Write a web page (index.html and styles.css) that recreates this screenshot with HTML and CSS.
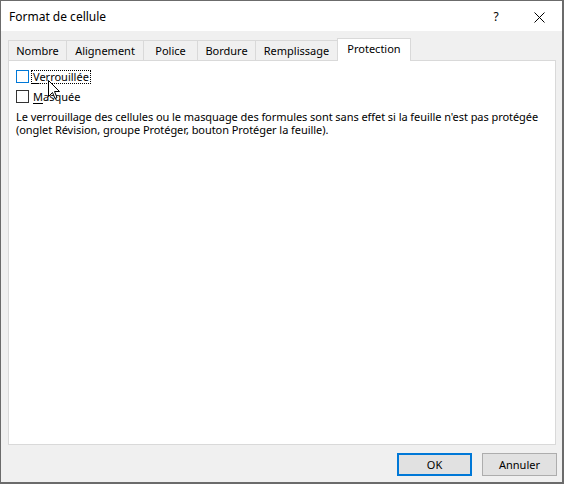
FILE: index.html
```html
<!DOCTYPE html>
<html lang="fr">
<head>
<meta charset="utf-8">
<title>Format de cellule</title>
<link rel="stylesheet" href="styles.css">
</head>
<body>
<div class="window">
  <div class="titlebar">
    <span class="title">Format de cellule</span>
    <div class="controls">
      <span class="help">?</span>
      <span class="close"><svg width="11" height="11" viewBox="0 0 11 11"><path d="M0.5 0.5 L10.5 10.5 M10.5 0.5 L0.5 10.5" stroke="#000" stroke-width="1" fill="none"/></svg></span>
    </div>
  </div>
  <div class="body">
    <div class="tabs">
      <div class="tab tab-nombre">Nombre</div>
      <div class="tab tab-align">Alignement</div>
      <div class="tab tab-police">Police</div>
      <div class="tab tab-bordure">Bordure</div>
      <div class="tab tab-rempl">Remplissage</div>
      <div class="tab tab-active">Protection</div>
    </div>
    <div class="panel">
      <div class="row">
        <span class="box box-hover"></span>
        <span class="label label-focus"><u>V</u>errouillée</span>
      </div>
      <div class="row">
        <span class="box"></span>
        <span class="label"><u>M</u>asquée</span>
      </div>
      <div class="note">
        <div class="note-line">Le verrouillage des cellules ou le masquage des formules sont sans effet si la feuille n'est pas protégée</div>
        <div class="note-line">(onglet Révision, groupe Protéger, bouton Protéger la feuille).</div>
      </div>
      <svg class="cursor" width="13" height="20" viewBox="0 0 13 20"><path d="M0.5 0.5 L0.5 16.5 L4.5 12.5 L7 18.5 L9 17.5 L6.5 11.5 L11.5 11.5 Z" fill="#fff" stroke="#000" stroke-width="1" stroke-linejoin="miter"/></svg>
    </div>
    <div class="footer">
      <button class="btn btn-default">OK</button>
      <button class="btn">Annuler</button>
    </div>
  </div>
</div>
</body>
</html>
```

FILE: styles.css
```css
html, body {
  margin: 0;
  padding: 0;
  background: #f0f0f0;
}
* { box-sizing: border-box; }

.window {
  width: 564px;
  height: 484px;
  border: 1px solid #6b6b6b;
  border-right-width: 2px;
  border-bottom-width: 2px;
  display: flex;
  flex-direction: column;
  font-family: "Noto Sans", "Open Sans", sans-serif;
  font-size: 11px;
  color: #000;
  background: #f0f0f0;
}

.titlebar {
  height: 30px;
  background: #fff;
  display: flex;
  align-items: center;
  padding-left: 8px;
  flex: none;
}
.title {
  font-size: 12px;
  flex: 1;
  padding-top: 1px;
}
.controls {
  display: flex;
  height: 30px;
}
.help {
  width: 40px;
  display: flex;
  align-items: center;
  justify-content: center;
  font-size: 12px;
  padding-top: 1px;
}
.close {
  width: 46px;
  display: flex;
  align-items: center;
  justify-content: center;
  padding-top: 2px;
}

.body {
  flex: 1;
  display: flex;
  flex-direction: column;
  padding: 7px 6px 6px 7px;
}

.tabs {
  display: flex;
  align-items: flex-end;
  height: 22px;
  flex: none;
}
.tab {
  height: 20px;
  border-top: 1px solid #d9d9d9;
  border-left: 1px solid #d9d9d9;
  display: flex;
  align-items: center;
  justify-content: center;
  padding-bottom: 1px;
  white-space: nowrap;
}
.tab-nombre { width: 58px; }
.tab-align { width: 77px; }
.tab-police { width: 54px; }
.tab-bordure { width: 58px; }
.tab-rempl { width: 82px; }
.tab-active {
  width: 74px;
  height: 23px;
  margin-bottom: -1px;
  background: #fff;
  border-right: 1px solid #d9d9d9;
  position: relative;
  z-index: 1;
  padding-bottom: 3px;
}

.panel {
  height: 385px;
  flex: none;
  background: #fff;
  border: 1px solid #d9d9d9;
  padding: 9px 7px;
  position: relative;
}
.row {
  display: flex;
  align-items: flex-start;
  height: 14px;
  margin-bottom: 6px;
}
.box {
  width: 13px;
  height: 13px;
  border: 1px solid #333;
  background: #fff;
  margin-right: 2px;
  flex: none;
}
.box-hover { border-color: #0078d7; }
.label {
  height: 14px;
  line-height: 12px;
  padding: 0 1px;
  border: 1px solid transparent;
  white-space: nowrap;
}
.label-focus { border: 1px dotted #000; }
.label u { text-underline-offset: 2px; }

.note {
  margin-top: 3px;
  letter-spacing: -0.06px;
}
.note-line {
  height: 13px;
  line-height: 13px;
  white-space: nowrap;
}

.cursor {
  position: absolute;
  left: 39px;
  top: 19px;
}

.footer {
  display: flex;
  justify-content: flex-end;
  gap: 10px;
  margin-top: 8px;
  margin-right: -1px;
}
.btn {
  width: 75px;
  height: 23px;
  background: #e1e1e1;
  border: 1px solid #adadad;
  font-family: "Noto Sans", "Open Sans", sans-serif;
  font-size: 11px;
  color: #000;
  padding: 0;
  margin: 0;
}
.btn-default {
  border-color: #0078d7;
  box-shadow: inset 0 0 0 1px #0078d7;
}
```
